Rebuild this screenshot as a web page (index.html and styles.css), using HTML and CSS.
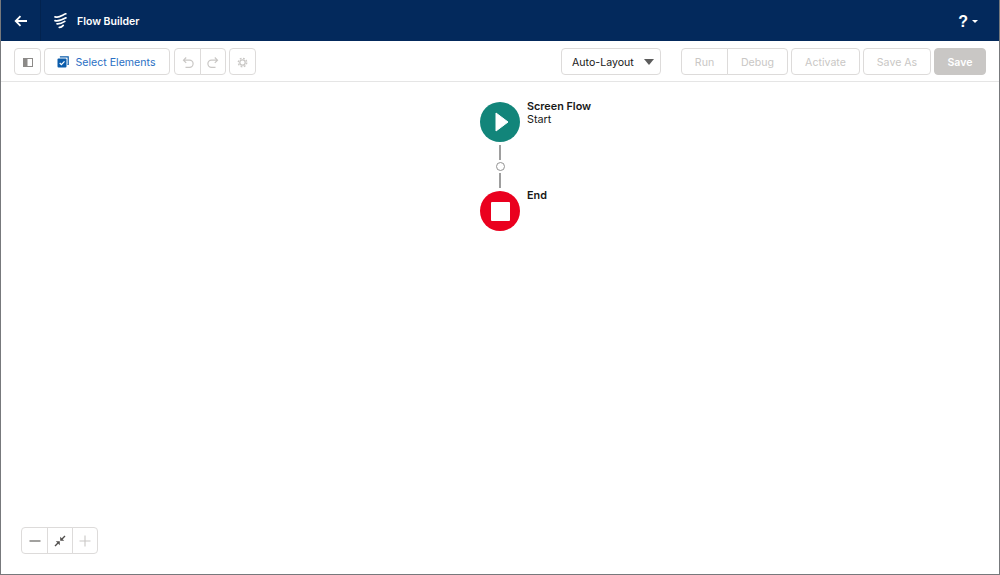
FILE: index.html
```html
<!DOCTYPE html>
<html lang="en">
<head>
    <meta charset="UTF-8">
    <title>Flow Builder</title>
    <link rel="stylesheet" href="styles.css">
</head>
<body>
    <div class="window">
        <!-- Header -->
        <div class="header">
            <div class="back-cell">
                <svg width="14" height="12" viewBox="0 0 14 12"><path d="M13 6H2M6.500 1.200 1.700 6l4.800 4.800" fill="none" stroke="#fff" stroke-width="1.800"/></svg>
            </div>
            <div class="title-cell">
                <svg class="flow-logo" width="13" height="16" viewBox="0 0 13 16"><path d="M1 3.800C3.500 4.400 6 3.800 8 2.600 9.500 1.800 10.500 1.200 11.800.8M1 7.600C3.500 8.200 7 7.600 12 4.800M3 10.800C5.500 11 8 10.200 10.800 8.400M5.300 14.400C6.800 14.600 8 13.800 9.200 12.400" fill="none" stroke="#fff" stroke-width="1.700" stroke-linecap="round"/></svg>
                <span>Flow Builder</span>
            </div>
            <div class="help">
                <span class="help-mark">?</span>
                <span class="help-caret"></span>
            </div>
        </div>

        <!-- Toolbar -->
        <div class="toolbar">
            <button class="btn icon-btn">
                <svg width="10" height="9" viewBox="0 0 10 9"><rect x="0.500" y="0.500" width="9" height="8" fill="#fff" stroke="#8c8a88"/><rect x="1" y="1" width="3.500" height="7" fill="#8c8a88"/></svg>
            </button>
            <button class="btn select-btn">
                <svg width="12" height="12" viewBox="0 0 12 12"><path d="M3.500 1.500V.8h7.700v7.700h-.8" fill="none" stroke="#0b5cab" stroke-width="1.200"/><rect x="0.500" y="2.500" width="9" height="9" rx="1" fill="#0b5cab"/><path d="M2.700 7 4.400 8.700 7.500 5.300" fill="none" stroke="#fff" stroke-width="1.200"/></svg>
                Select Elements
            </button>
            <div class="btn-group">
                <button class="btn icon-btn">
                    <svg width="12" height="13" viewBox="0 0 12 13"><path d="M4.200 1.500 1.500 4.200l2.700 2.700M1.800 4.200H7.500a3.500 3.500 0 0 1 0 7.200H3.500" fill="none" stroke="#c9c7c5" stroke-width="1.200"/></svg>
                </button>
                <button class="btn icon-btn">
                    <svg width="12" height="13" viewBox="0 0 12 13"><path d="M7.800 1.500l2.700 2.700-2.700 2.700M10.200 4.200H4.500a3.500 3.500 0 0 0 0 7.200h4" fill="none" stroke="#c9c7c5" stroke-width="1.200"/></svg>
                </button>
            </div>
            <button class="btn icon-btn gear-btn">
                <svg width="11" height="11" viewBox="0 0 13 13"><circle cx="6.500" cy="6.500" r="5" fill="none" stroke="#c9c7c5" stroke-width="1.600" stroke-dasharray="2.100 1.830"/><circle cx="6.500" cy="6.500" r="3.200" fill="none" stroke="#c9c7c5" stroke-width="1.500"/></svg>
            </button>

            <div class="spacer"></div>

            <div class="btn layout-select">
                <span>Auto-Layout</span>
                <span class="select-caret"></span>
            </div>
            <div class="btn-group run-group">
                <button class="btn run-btn">Run</button>
                <button class="btn debug-btn">Debug</button>
            </div>
            <button class="btn activate-btn">Activate</button>
            <button class="btn saveas-btn">Save As</button>
            <button class="btn save-btn">Save</button>
        </div>

        <!-- Canvas -->
        <div class="canvas">
            <div class="node start-node">
                <div class="circle start-circle">
                    <svg width="14" height="20" viewBox="0 0 14 20"><path d="M1 1 13 10 1 19z" fill="#fff" stroke="#fff" stroke-linejoin="round"/></svg>
                </div>
                <div class="node-label">
                    <strong>Screen Flow</strong>
                    <span>Start</span>
                </div>
            </div>
            <div class="connector line-top"></div>
            <div class="add-dot"></div>
            <div class="connector line-bottom"></div>
            <div class="node end-node">
                <div class="circle end-circle">
                    <div class="stop-square"></div>
                </div>
                <div class="node-label">
                    <strong>End</strong>
                </div>
            </div>

            <div class="btn-group zoom-controls">
                <button class="btn zoom-btn">
                    <svg width="12" height="12" viewBox="0 0 12 12"><path d="M.500 6h11" stroke="#706e6b" stroke-width="1.300"/></svg>
                </button>
                <button class="btn zoom-btn">
                    <svg width="12" height="12" viewBox="0 0 12 12"><path d="M8 4 11 1M4 8 1 11" stroke="#514f4d" stroke-width="1.400"/><path d="M6.200 1.800V5.800H10.200zM5.800 10.200V6.200H1.800z" fill="#514f4d"/></svg>
                </button>
                <button class="btn zoom-btn">
                    <svg width="12" height="12" viewBox="0 0 12 12"><path d="M.500 6h11M6 .5v11" stroke="#c9c7c5" stroke-width="1.100"/></svg>
                </button>
            </div>
        </div>
    </div>
</body>
</html>
```

FILE: styles.css
```css
* {
    font-family: 'Inter', 'Liberation Sans', sans-serif;
    box-sizing: border-box;
}
body {
    margin: 0;
    padding: 0;
    overflow: hidden;
    background-color: #fff;
}
.window {
    width: 1000px;
    height: 575px;
    display: flex;
    flex-direction: column;
    border: 1px solid #77797c;
    border-top: none;
}
.header {
    display: flex;
    align-items: center;
    height: 41px;
    flex-shrink: 0;
    background-color: #03295c;
    color: white;
}
.back-cell {
    width: 40px;
    height: 100%;
    display: flex;
    align-items: center;
    justify-content: center;
    border-right: 1px solid #02234f;
}
.title-cell {
    display: flex;
    align-items: center;
    padding-left: 13px;
    font-size: 10.5px;
    font-weight: 600;
}
.title-cell span {
    padding-top: 2px;
}
.flow-logo {
    margin-right: 10px;
}
.help {
    margin-left: auto;
    margin-right: 21px;
    padding-top: 2px;
    display: flex;
    align-items: center;
}
.help-mark {
    font-family: 'Liberation Sans', sans-serif;
    font-size: 16px;
    font-weight: 700;
    margin-right: 4px;
}
.help-caret {
    border-left: 3px solid transparent;
    border-right: 3px solid transparent;
    border-top: 3px solid #fff;
}
.toolbar {
    display: flex;
    align-items: center;
    height: 41px;
    flex-shrink: 0;
    padding: 1px 13px 0;
    background-color: #fff;
    border-bottom: 1px solid #e5e5e5;
}
.btn {
    height: 27px;
    padding: 1px 0 0;
    display: flex;
    align-items: center;
    justify-content: center;
    background-color: #fff;
    border: 1px solid #dddbda;
    border-radius: 4px;
    font-size: 10.6px;
    color: #c9c7c5;
}
.icon-btn {
    width: 27px;
}
.btn-group .icon-btn:last-child {
    width: 26px;
}
.select-btn {
    width: 126px;
    margin-left: 3px;
    margin-right: 4px;
    padding-right: 2px;
    color: #2a6fc4;
    font-size: 10.6px;
}
.select-btn svg {
    margin-right: 7px;
}
.btn-group {
    display: flex;
}
.btn-group .btn {
    border-radius: 0;
    margin-left: -1px;
}
.btn-group .btn:first-child {
    border-radius: 4px 0 0 4px;
    margin-left: 0;
}
.btn-group .btn:last-child {
    border-radius: 0 4px 4px 0;
}
.gear-btn {
    margin-left: 3px;
}
.spacer {
    flex: 1;
}
.layout-select {
    width: 100px;
    justify-content: space-between;
    padding: 1px 6px 0 10px;
    color: #181818;
    margin-right: 20px;
}
.select-caret {
    border-left: 5px solid transparent;
    border-right: 5px solid transparent;
    border-top: 6px solid #5c5c5c;
}
.run-btn {
    width: 47px;
}
.debug-btn {
    width: 61px;
}
.activate-btn {
    width: 69px;
    margin-left: 3px;
}
.saveas-btn {
    width: 68px;
    margin-left: 3px;
}
.save-btn {
    width: 52px;
    margin-left: 3px;
    background-color: #c9c7c5;
    border-color: #c9c7c5;
    color: #fff;
    font-weight: 600;
}
.canvas {
    position: relative;
    flex: 1;
    background-color: #fff;
}
.node {
    position: absolute;
    left: 479px;
    display: flex;
    gap: 7px;
}
.start-node {
    top: 20px;
}
.end-node {
    top: 109px;
}
.circle {
    width: 40px;
    height: 40px;
    border-radius: 50%;
    display: flex;
    align-items: center;
    justify-content: center;
}
.start-circle {
    background-color: #12857a;
    padding-left: 3px;
}
.end-circle {
    background-color: #ea001e;
}
.stop-square {
    width: 19px;
    height: 19px;
    border-radius: 1px;
    background-color: #fff;
}
.node-label {
    display: flex;
    flex-direction: column;
    font-size: 10.8px;
    line-height: 13px;
    color: #181818;
    margin-top: -2px;
}
.node-label strong {
    font-weight: 600;
}
.connector {
    position: absolute;
    left: 498px;
    width: 2px;
    background-color: #9e9e9e;
}
.line-top {
    top: 63px;
    height: 15px;
}
.line-bottom {
    top: 91px;
    height: 15px;
}
.add-dot {
    position: absolute;
    left: 494.500px;
    top: 80px;
    width: 9px;
    height: 9px;
    border: 1px solid #939393;
    border-radius: 50%;
    background-color: #fff;
}
.zoom-controls {
    position: absolute;
    left: 20px;
    bottom: 20px;
}
.zoom-btn {
    width: 26px;
}
.zoom-btn:first-child {
    width: 27px;
}
```
